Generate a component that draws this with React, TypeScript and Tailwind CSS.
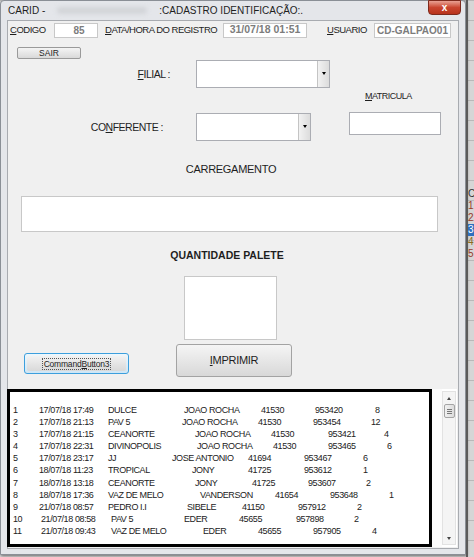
import React from 'react'

const rows = [
  ['1', '17/07/18 17:49', 'DULCE', 'JOAO ROCHA', '41530', '953420', '8'],
  ['2', '17/07/18 21:13', 'PAV 5', 'JOAO ROCHA', '41530', '953454', '12'],
  ['3', '17/07/18 21:15', 'CEANORTE', 'JOAO ROCHA', '41530', '953421', '4'],
  ['4', '17/07/18 22:31', 'DIVINOPOLIS', 'JOAO ROCHA', '41530', '953465', '6'],
  ['5', '17/07/18 23:17', 'JJ', 'JOSE ANTONIO', '41694', '953467', '6'],
  ['6', '18/07/18 11:23', 'TROPICAL', 'JONY', '41725', '953612', '1'],
  ['7', '18/07/18 13:18', 'CEANORTE', 'JONY', '41725', '953607', '2'],
  ['8', '18/07/18 17:36', 'VAZ DE MELO', 'VANDERSON', '41654', '953648', '1'],
  ['9', '21/07/18 08:57', 'PEDRO I.I', 'SIBELE', '41150', '957912', '2'],
  ['10', '21/07/18 08:58', 'PAV 5', 'EDER', '45655', '957898', '2'],
  ['11', '21/07/18 09:43', 'VAZ DE MELO', 'EDER', '45655', '957905', '4'],
]

// x where each column starts, per row (tab stops drift with the text)
const stops = [
  [13, 39, 108, 184, 261, 315, 375],
  [13, 39, 108, 182, 258, 313, 371],
  [13, 39, 108, 195, 271, 328, 384],
  [13, 39, 108, 197, 273, 328, 387],
  [13, 39, 108, 172, 248, 304, 363],
  [13, 39, 108, 192, 248, 304, 363],
  [13, 39, 108, 195, 252, 308, 366],
  [13, 39, 108, 200, 275, 330, 389],
  [13, 39, 108, 187, 242, 298, 357],
  [13, 41, 111, 184, 239, 296, 354],
  [13, 41, 111, 203, 258, 313, 372],
]

function U({ children }: { children: React.ReactNode }) {
  return <span className="underline underline-offset-[1px]">{children}</span>
}

function Combo({ w }: { w: string }) {
  return (
    <div className={`${w} h-[28px] bg-white border border-[#abadb3] flex justify-end`}>
      <div className="w-[12px] h-full border-l border-[#c4c4c4] bg-gradient-to-r from-[#f2f2f2] to-[#dcdcdc] flex items-center justify-center">
        <div className="w-0 h-0 border-l-[2.5px] border-r-[2.5px] border-t-[3px] border-l-transparent border-r-transparent border-t-black" />
      </div>
    </div>
  )
}

export default function App() {
  return (
    <div
      className="w-[474px] h-[557px] overflow-hidden flex bg-[#d6d6d6] bg-[linear-gradient(#b9b9b9_1px,transparent_1px)] bg-[length:100%_20px] text-[#1e1e1e]"
      style={{ fontFamily: '"Liberation Sans", Arial, sans-serif' }}
    >
      {/* window */}
      <div className="w-[466px] h-[555px] shrink-0 bg-[#e4e6ea] border border-[#8a8f96] rounded-t-[4px] flex flex-col px-[6px] pb-[5px] shadow-[1px_1px_3px_rgba(0,0,0,0.5)]">
        {/* title bar */}
        <div className="h-[19px] flex items-center text-[10px] relative">
          <span className="ml-[1px]">CARID -</span>
          <span className="ml-[12px] w-[90px] h-[7px] bg-[#d2d4d8] blur-[2px] rounded" />
          <span className="ml-[12px]">:CADASTRO IDENTIFICAÇÃO:.</span>
          <div className="absolute right-[-2px] top-[-1px] w-[33px] h-[15px] rounded-b-[4px] bg-gradient-to-b from-[#e8a093] via-[#c9452f] to-[#b8331c] border border-[#7d2a1d] flex items-center justify-center">
            <span className="text-white text-[10px] font-bold leading-none">x</span>
          </div>
        </div>

        {/* client area */}
        <div className="flex-1 bg-[#f0f0f0] border border-[#a8abb0] flex flex-col text-[9.5px] tracking-[-0.5px]">
          {/* header row */}
          <div className="flex items-center h-[15px] mt-[2px]">
            <span className="ml-[2px] w-[44px]"><U>C</U>ODIGO</span>
            <div className="w-[44px] h-[15px] bg-white border border-[#c8c8c8] flex items-center justify-center text-[10px] font-bold text-[#7c7c7c] tracking-normal pl-[6px]">85</div>
            <span className="ml-[7px] w-[118px]"><U>D</U>ATA/HORA DO REGISTRO</span>
            <div className="w-[84px] h-[15px] bg-white border border-[#c8c8c8] flex items-center justify-center text-[10.5px] font-bold text-[#7c7c7c] tracking-normal">31/07/18 01:51</div>
            <span className="ml-[20px] w-[47px]"><U>U</U>SUARIO</span>
            <div className="w-[77px] h-[15px] bg-white border border-[#c8c8c8] flex items-center justify-center text-[10px] font-bold text-[#7c7c7c] tracking-normal">CD-GALPAO01</div>
          </div>

          {/* sair */}
          <div className="mt-[9px] ml-[9px] w-[64px] h-[12px] rounded-[2px] border border-[#9a9a9a] bg-gradient-to-b from-[#f4f4f4] to-[#d9d9d9] flex items-center justify-center text-[8.5px] leading-none tracking-normal">SAIR</div>

          {/* filial */}
          <div className="flex items-center h-[28px] mt-[1px]">
            <span className="w-[162px] text-right text-[10.5px] mt-[2px]"><U>F</U>ILIAL :</span>
            <div className="ml-[26px]"><Combo w="w-[134px]" /></div>
          </div>

          {/* matricula label */}
          <div className="h-[18px] flex items-center">
            <span className="ml-[357px] text-[9px]"><U>M</U>ATRICULA</span>
          </div>

          {/* conferente */}
          <div className="flex items-start h-[28px] mt-[6px]">
            <span className="w-[155px] text-right text-[10.5px] mt-[8px]">CO<U>N</U>FERENTE :</span>
            <div className="ml-[33px] mt-[1px]"><Combo w="w-[115px]" /></div>
            <div className="ml-[38px] w-[92px] h-[23px] bg-white border border-[#abadb3]" />
          </div>

          {/* carregamento */}
          <div className="mt-[21px] ml-[168px] w-[110px] text-center text-[11px] tracking-[-0.3px]">CARREGAMENTO</div>

          <div className="mt-[19px] ml-[13px] w-[417px] h-[36px] bg-white border border-[#c8c8c8]" />

          <div className="mt-[16px] ml-[157px] w-[124px] text-center text-[10.5px] font-bold tracking-normal">QUANTIDADE PALETE</div>

          <div className="mt-[12px] ml-[176px] w-[93px] h-[64px] bg-white border border-[#c8c8c8]" />

          {/* buttons */}
          <div className="flex items-start mt-[4px]">
            <div className="ml-[16px] mt-[9px] w-[105px] h-[21px] rounded-[3px] border border-[#3c9fdd] bg-gradient-to-b from-[#eef7fc] to-[#cfe6f5] p-[2px] flex items-center justify-center">
              <div className="w-full h-full rounded-[2px] bg-gradient-to-b from-[#f2f2f2] to-[#d9d9d9] flex items-center justify-center">
                <span className="border border-dotted border-[#555] px-[1px] text-[8.5px] leading-[10px] tracking-[-0.2px]">Command<U>B</U>utton3</span>
              </div>
            </div>
            <div className="ml-[47px] w-[116px] h-[33px] rounded-[3px] border border-[#a3a3a3] bg-gradient-to-b from-[#f5f5f5] to-[#d8d8d8] flex items-center justify-center text-[11px] tracking-[-0.3px]">
              <span><U>I</U>MPRIMIR</span>
            </div>
          </div>

          {/* list */}
          <div className="mt-[12px] flex-1 bg-white flex -ml-[1px] mr-[1px] mb-[1px]">
            <div className="w-[425px] h-[158px] border-[3px] border-black pt-[12px] text-[9px] tracking-[-0.4px] leading-[12.1px] text-[#222]">
              {rows.map((r, i) => (
                <div key={i} className="flex whitespace-nowrap">
                  {r.map((c, j) => (
                    <span
                      key={j}
                      className="inline-block"
                      style={{
                        marginLeft: j === 0 ? stops[i][0] - 10 : 0,
                        width: j < r.length - 1 ? stops[i][j + 1] - stops[i][j] : undefined,
                      }}
                    >
                      {c}
                    </span>
                  ))}
                </div>
              ))}
            </div>
            <div className="flex-1 bg-[#fbfbfb]" />
            {/* scrollbar */}
            <div className="w-[14px] my-[2px] mr-[1px] bg-[#f4f4f4] border border-[#e2e2e2] flex flex-col items-center">
              <div className="h-[12px] flex items-center justify-center">
                <div className="w-0 h-0 border-l-[2.5px] border-r-[2.5px] border-b-[3px] border-l-transparent border-r-transparent border-b-[#444]" />
              </div>
              <div className="w-[11px] h-[14px] rounded-[2px] border border-[#a4a4a4] bg-gradient-to-r from-[#f1f1f1] to-[#dcdcdc] flex flex-col items-center justify-center gap-[1px]">
                <div className="w-[5px] h-px bg-[#777]" />
                <div className="w-[5px] h-px bg-[#777]" />
                <div className="w-[5px] h-px bg-[#777]" />
              </div>
              <div className="flex-1" />
              <div className="h-[12px] flex items-center justify-center">
                <div className="w-0 h-0 border-l-[2.5px] border-r-[2.5px] border-t-[3px] border-l-transparent border-r-transparent border-t-[#444]" />
              </div>
            </div>
          </div>
        </div>
      </div>

      {/* spreadsheet behind */}
      <div className="flex-1 border-l-2 border-[#5a5a5a] flex flex-col pt-[188px] text-[10px] leading-[12px] text-[#333]">
        <span>C</span>
        <span className="text-[#9a3a2a]">1</span>
        <span className="text-[#9a3a2a]">2</span>
        <span className="bg-[#2f6fbf] text-white">3</span>
        <span className="text-[#8a6a20]">4</span>
        <span className="text-[#9a3a2a]">5</span>
      </div>
    </div>
  )
}
